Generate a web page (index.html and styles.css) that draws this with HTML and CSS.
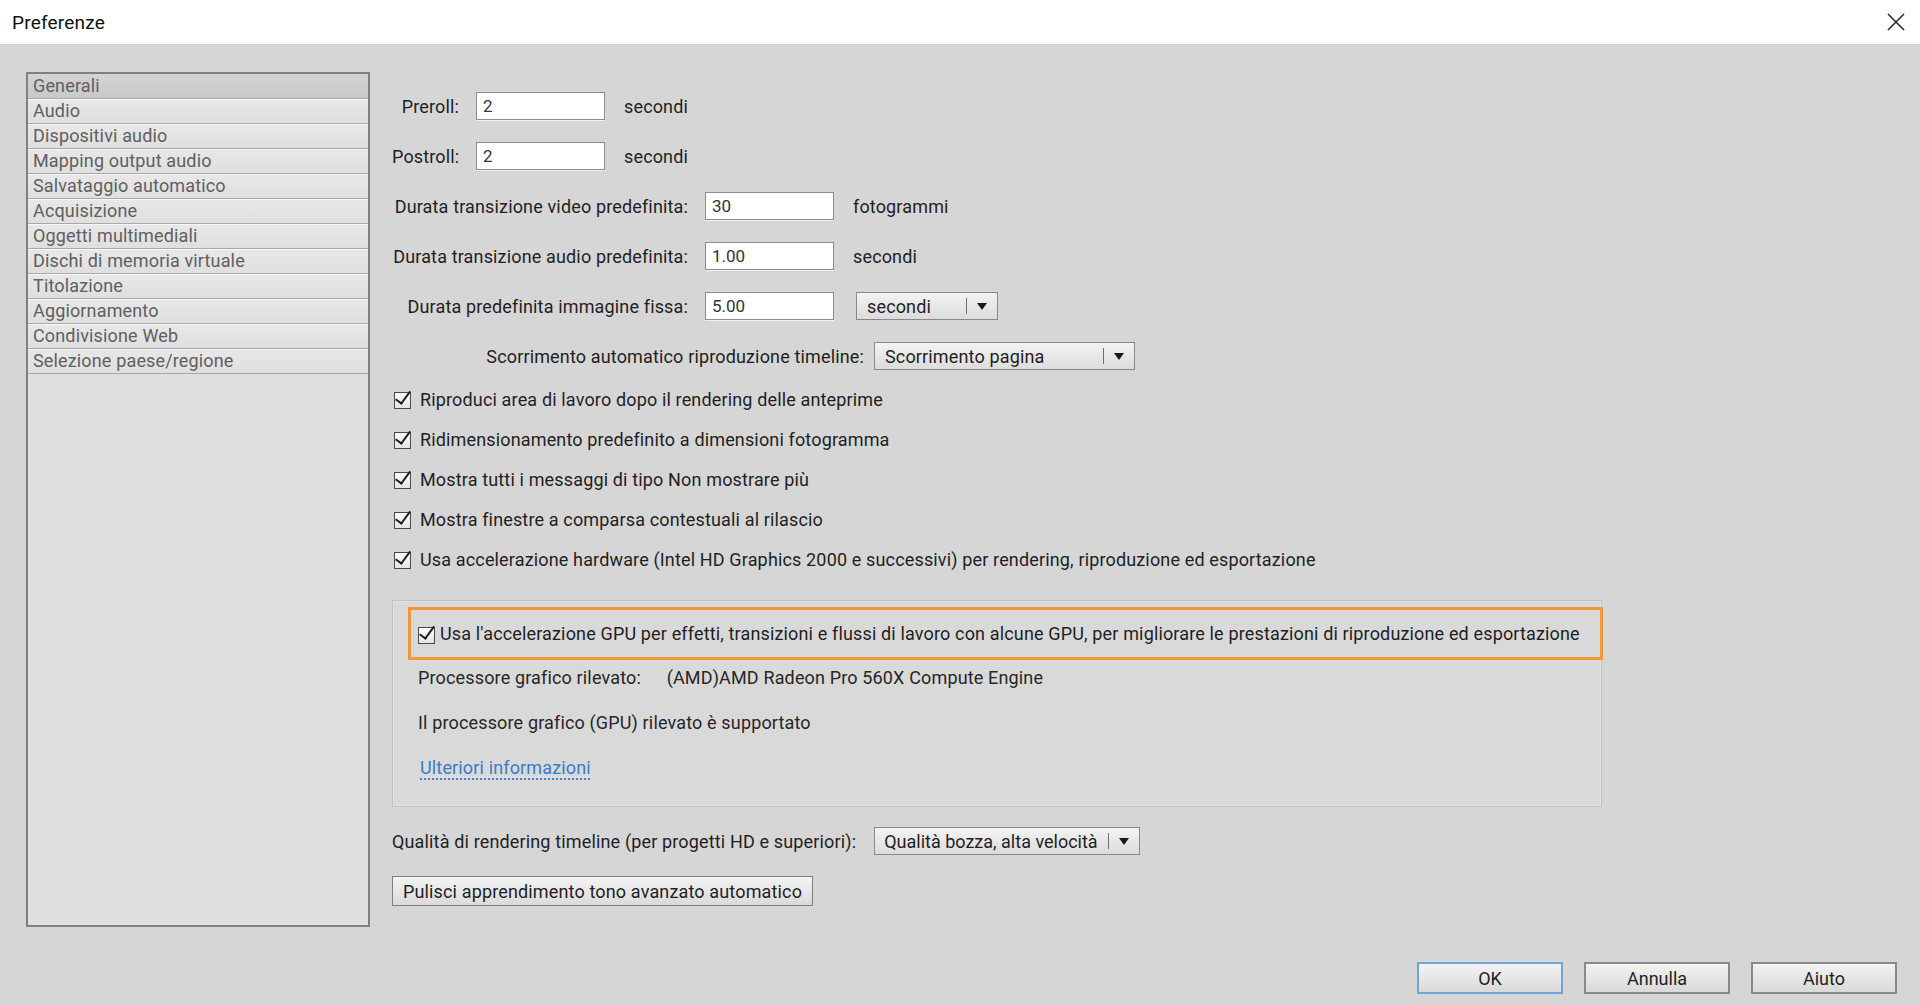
FILE: index.html
```html
<!DOCTYPE html>
<html lang="it">
<head>
    <meta charset="UTF-8">
    <meta name="viewport" content="width=device-width, initial-scale=1.0">
    <title>Preferenze</title>
    <link rel="stylesheet" href="styles.css">
</head>
<body>

<div class="titlebar">
    <span class="title">Preferenze</span>
    <button class="closeBtn" aria-label="Chiudi">
        <svg width="20" height="20" viewBox="0 0 20 20"><path d="M2 2 L18 18 M18 2 L2 18" stroke="#2b2b2b" stroke-width="1.6" fill="none"/></svg>
    </button>
</div>

<div class="dialog">
    <div class="main">
        <ul class="sidebar">
            <li class="selected">Generali</li>
            <li>Audio</li>
            <li>Dispositivi audio</li>
            <li>Mapping output audio</li>
            <li>Salvataggio automatico</li>
            <li>Acquisizione</li>
            <li>Oggetti multimediali</li>
            <li>Dischi di memoria virtuale</li>
            <li>Titolazione</li>
            <li>Aggiornamento</li>
            <li>Condivisione Web</li>
            <li>Selezione paese/regione</li>
        </ul>

        <div class="pane">
            <div class="field">
                <label class="lbl lbl-short">Preroll:</label>
                <input class="textbox" type="text" value="2">
                <span class="unit">secondi</span>
            </div>
            <div class="field">
                <label class="lbl lbl-short">Postroll:</label>
                <input class="textbox" type="text" value="2">
                <span class="unit">secondi</span>
            </div>
            <div class="field">
                <label class="lbl lbl-mid">Durata transizione video predefinita:</label>
                <input class="textbox" type="text" value="30">
                <span class="unit">fotogrammi</span>
            </div>
            <div class="field">
                <label class="lbl lbl-mid">Durata transizione audio predefinita:</label>
                <input class="textbox" type="text" value="1.00">
                <span class="unit">secondi</span>
            </div>
            <div class="field">
                <label class="lbl lbl-mid">Durata predefinita immagine fissa:</label>
                <input class="textbox" type="text" value="5.00">
                <div class="select select-unit">
                    <span class="selectText">secondi</span>
                    <span class="selectArrow"></span>
                </div>
            </div>
            <div class="field">
                <label class="lbl lbl-long">Scorrimento automatico riproduzione timeline:</label>
                <div class="select select-scroll">
                    <span class="selectText">Scorrimento pagina</span>
                    <span class="selectArrow"></span>
                </div>
            </div>

            <div class="checks">
                <div class="check"><span class="box"></span>Riproduci area di lavoro dopo il rendering delle anteprime</div>
                <div class="check"><span class="box"></span>Ridimensionamento predefinito a dimensioni fotogramma</div>
                <div class="check"><span class="box"></span>Mostra tutti i messaggi di tipo Non mostrare più</div>
                <div class="check"><span class="box"></span>Mostra finestre a comparsa contestuali al rilascio</div>
                <div class="check"><span class="box"></span>Usa accelerazione hardware (Intel HD Graphics 2000 e successivi) per rendering, riproduzione ed esportazione</div>
            </div>

            <div class="gpuPanel">
                <div class="highlight">
                    <div class="check"><span class="box"></span>Usa l'accelerazione GPU per effetti, transizioni e flussi di lavoro con alcune GPU, per migliorare le prestazioni di riproduzione ed esportazione</div>
                </div>
                <div class="gpuRow">
                    <span class="gpuLabel">Processore grafico rilevato:</span>
                    <span>(AMD)AMD Radeon Pro 560X Compute Engine</span>
                </div>
                <div class="gpuRow">Il processore grafico (GPU) rilevato è supportato</div>
                <div class="gpuRow"><a class="moreLink" href="#">Ulteriori informazioni</a></div>
            </div>

            <div class="field field-quality">
                <label class="lbl">Qualità di rendering timeline (per progetti HD e superiori):</label>
                <div class="select select-quality">
                    <span class="selectText">Qualità bozza, alta velocità</span>
                    <span class="selectArrow"></span>
                </div>
            </div>

            <button class="pushBtn">Pulisci apprendimento tono avanzato automatico</button>
        </div>
    </div>

    <div class="footer">
        <button class="dlgBtn default">OK</button>
        <button class="dlgBtn">Annulla</button>
        <button class="dlgBtn">Aiuto</button>
    </div>
</div>

</body>
</html>
```

FILE: styles.css
```css
body {
    margin: 0;
    height: 1005px;
    background: #d6d6d6;
    font-family: Roboto, "Liberation Sans", sans-serif;
    font-size: 18px;
    letter-spacing: 0.15px;
    color: #1f1f1f;
    overflow: hidden;
}
.titlebar {
    height: 45px;
    background: #ffffff;
    display: flex;
    align-items: center;
    justify-content: space-between;
    padding: 0 10px 0 12px;
    border-bottom: 1px solid #cfcfcf;
    box-sizing: border-box;
}
.title {
    font-size: 19px;
    letter-spacing: 0.2px;
    color: #111;
}
.closeBtn {
    background: none;
    border: none;
    padding: 4px;
    display: flex;
    cursor: pointer;
}
.main {
    display: flex;
    padding: 27px 0 0 26px;
}
.sidebar {
    list-style: none;
    margin: 0;
    padding: 0;
    width: 344px;
    height: 855px;
    box-sizing: border-box;
    border: 2px solid #808080;
    background: #dfdfdf;
}
.sidebar li {
    height: 25px;
    line-height: 24px;
    padding-left: 5px;
    box-sizing: border-box;
    color: #606060;
    background: linear-gradient(#e8e8e8, #dfdfdf);
    border-bottom: 1px solid #a9a9a9;
    box-shadow: inset 0 1px 0 #f7f7f7;
}
.sidebar li.selected {
    background: linear-gradient(#d3d3d3, #c9c9c9);
    box-shadow: none;
}
.pane {
    margin-left: 22px;
    padding-top: 20px;
    display: flex;
    flex-direction: column;
    align-items: flex-start;
}
.field {
    display: flex;
    align-items: center;
    height: 28px;
    margin-bottom: 22px;
}
.lbl {
    text-align: right;
    margin-right: 17px;
    white-space: nowrap;
}
.lbl-short { width: 67px; }
.lbl-mid { width: 296px; }
.lbl-long { width: 472px; margin-right: 10px; }
.textbox {
    width: 129px;
    height: 28px;
    box-sizing: border-box;
    border: 1px solid #8c8c8c;
    box-shadow: 0 1px 0 #f0f0f0;
    background: #fff;
    font-family: inherit;
    font-size: 17px;
    color: #333;
    padding: 0 6px;
}
.unit {
    margin-left: 19px;
}
.select {
    height: 28px;
    box-sizing: border-box;
    border: 1px solid #888;
    background: linear-gradient(#f3f3f3, #dcdcdc);
    display: flex;
    align-items: center;
    padding-left: 10px;
}
.selectText {
    flex: 1;
    white-space: nowrap;
}
.selectArrow {
    width: 30px;
    height: 16px;
    border-left: 1px solid #6e6e6e;
    display: flex;
    align-items: center;
    justify-content: center;
}
.selectArrow::after {
    content: "";
    border-left: 5px solid transparent;
    border-right: 5px solid transparent;
    border-top: 7px solid #1a1a1a;
}
.select-unit { width: 142px; margin-left: 22px; }
.select-scroll { width: 261px; }
.select-quality { width: 266px; padding-left: 9px; }
.select-quality .selectText { letter-spacing: 0; }
.checks {
    margin-top: -5px;
    display: flex;
    flex-direction: column;
    gap: 16px;
}
.check {
    display: flex;
    align-items: center;
    height: 24px;
    white-space: nowrap;
}
.box {
    width: 15px;
    height: 15px;
    border: 1px solid #4a4a4a;
    background: linear-gradient(#ffffff, #e4e4e4);
    margin: 3px 9px 0 2px;
    position: relative;
}
.box::after {
    content: "";
    position: absolute;
    left: 4px;
    top: -5px;
    width: 6px;
    height: 14px;
    border-right: 2px solid #1c1c1c;
    border-bottom: 2px solid #1c1c1c;
    transform: rotate(36deg);
    transform-origin: 50% 50%;
}
.gpuPanel {
    width: 1210px;
    height: 207px;
    box-sizing: border-box;
    margin-top: 29px;
    border: 1px solid #c2c2c2;
    box-shadow: inset 0 0 0 1px #e2e2e2;
    background: #d9d9d9;
    padding: 6px 0 0 15px;
}
.highlight {
    border: 3px solid #f0983a;
    height: 53px;
    box-sizing: border-box;
    margin-right: -2px;
    padding-left: 5px;
    display: flex;
    align-items: center;
}
.highlight .box { margin-right: 5px; }
.gpuRow {
    height: 24px;
    line-height: 24px;
    margin-top: 21px;
    padding-left: 10px;
    color: #262626;
}
.gpuRow:nth-child(2) { margin-top: 6px; }
.gpuLabel {
    display: inline-block;
    width: 244px;
}
.moreLink {
    color: #3a7cc9;
    text-decoration: underline dotted;
    text-underline-offset: 5px;
    margin-left: 2px;
}
.field-quality {
    margin-top: 20px;
    margin-bottom: 21px;
}
.field-quality .lbl {
    margin-right: 18px;
}
.pushBtn {
    width: 421px;
    height: 30px;
    border: 1px solid #7f7f7f;
    background: linear-gradient(#f4f4f4, #dadada);
    font-family: inherit;
    font-size: 18px;
    letter-spacing: 0.15px;
    color: #1f1f1f;
    padding: 0;
}
.footer {
    display: flex;
    justify-content: flex-end;
    gap: 21px;
    padding: 35px 23px 0 0;
}
.dlgBtn {
    width: 146px;
    height: 32px;
    border: 2px solid #8a8a8a;
    background: linear-gradient(#f3f3f3, #d9d9d9);
    font-family: inherit;
    font-size: 18px;
    color: #1f1f1f;
}
.dlgBtn.default {
    border-color: #6ea6dc;
}
```
